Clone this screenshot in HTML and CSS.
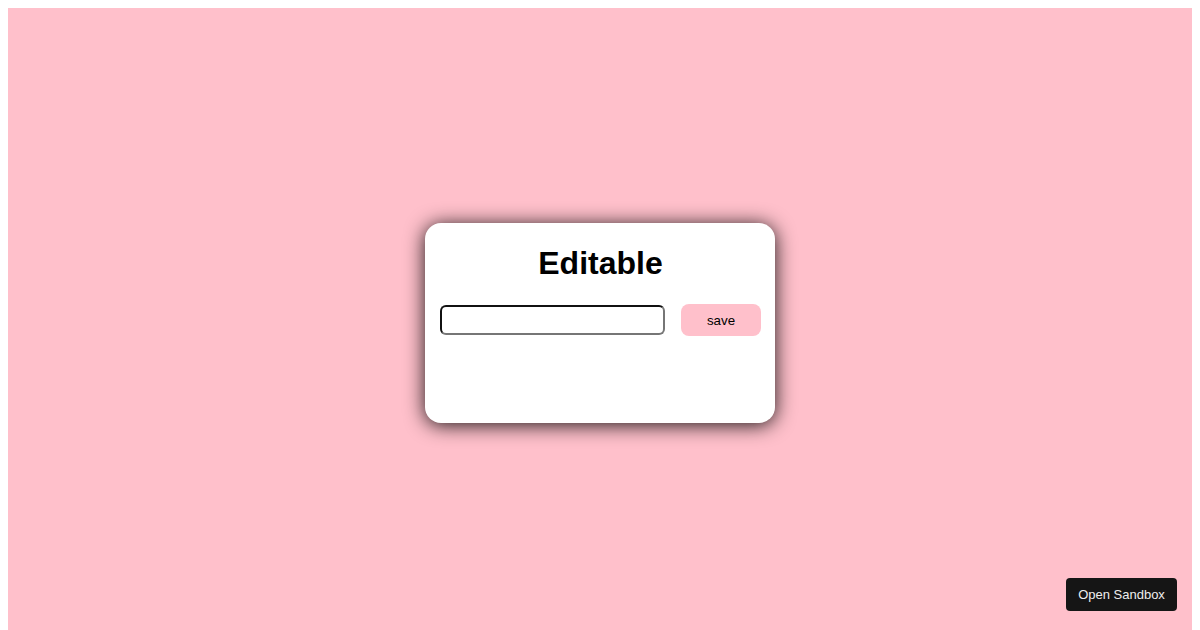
FILE: index.html
```html
<!DOCTYPE html>
<html>
<head>
<meta charset="utf-8">
<link rel="stylesheet" href="styles.css">
</head>
<body>
<div class="app">
  <div class="card">
    <h1 class="title">Editable</h1>
    <div class="row">
      <input class="field" type="text">
      <button class="save">save</button>
    </div>
  </div>
</div>
<a class="sandbox">Open Sandbox</a>
</body>
</html>
```

FILE: styles.css
```css
body {
  margin: 8px;
  font-family: "Liberation Sans", Arial, sans-serif;
}
.app {
  background: #ffc0cb;
  height: 100vh;
  display: flex;
  align-items: center;
  justify-content: center;
}
.card {
  width: 350px;
  height: 200px;
  box-sizing: border-box;
  background: #fff;
  border-radius: 16px;
  box-shadow: 0 2px 20px rgba(0,0,0,0.9);
  display: flex;
  flex-direction: column;
  padding: 0 14px 0 15px;
}
.title {
  font-size: 32px;
  font-weight: bold;
  text-align: center;
  margin: 22px 0 22px;
}
.row {
  display: flex;
  align-items: center;
  gap: 16px;
}
.field {
  width: 225px;
  height: 30px;
  box-sizing: border-box;
  border: 2px solid #767676;
  border-top-color: #111;
  border-left-color: #111;
  border-radius: 6px;
  padding: 0 4px;
  background: #fff;
}
.save {
  width: 80px;
  height: 32px;
  border: none;
  border-radius: 8px;
  background: #ffc0cb;
  font-family: "Liberation Sans", Arial, sans-serif;
  font-size: 13.33px;
  color: #000;
}
.sandbox {
  position: fixed;
  right: 23px;
  bottom: 19px;
  width: 111px;
  height: 33px;
  box-sizing: border-box;
  background: #151515;
  color: #eee;
  border-radius: 4px;
  font-family: "Liberation Sans", Arial, sans-serif;
  font-size: 13px;
  display: flex;
  align-items: center;
  justify-content: center;
}
```
